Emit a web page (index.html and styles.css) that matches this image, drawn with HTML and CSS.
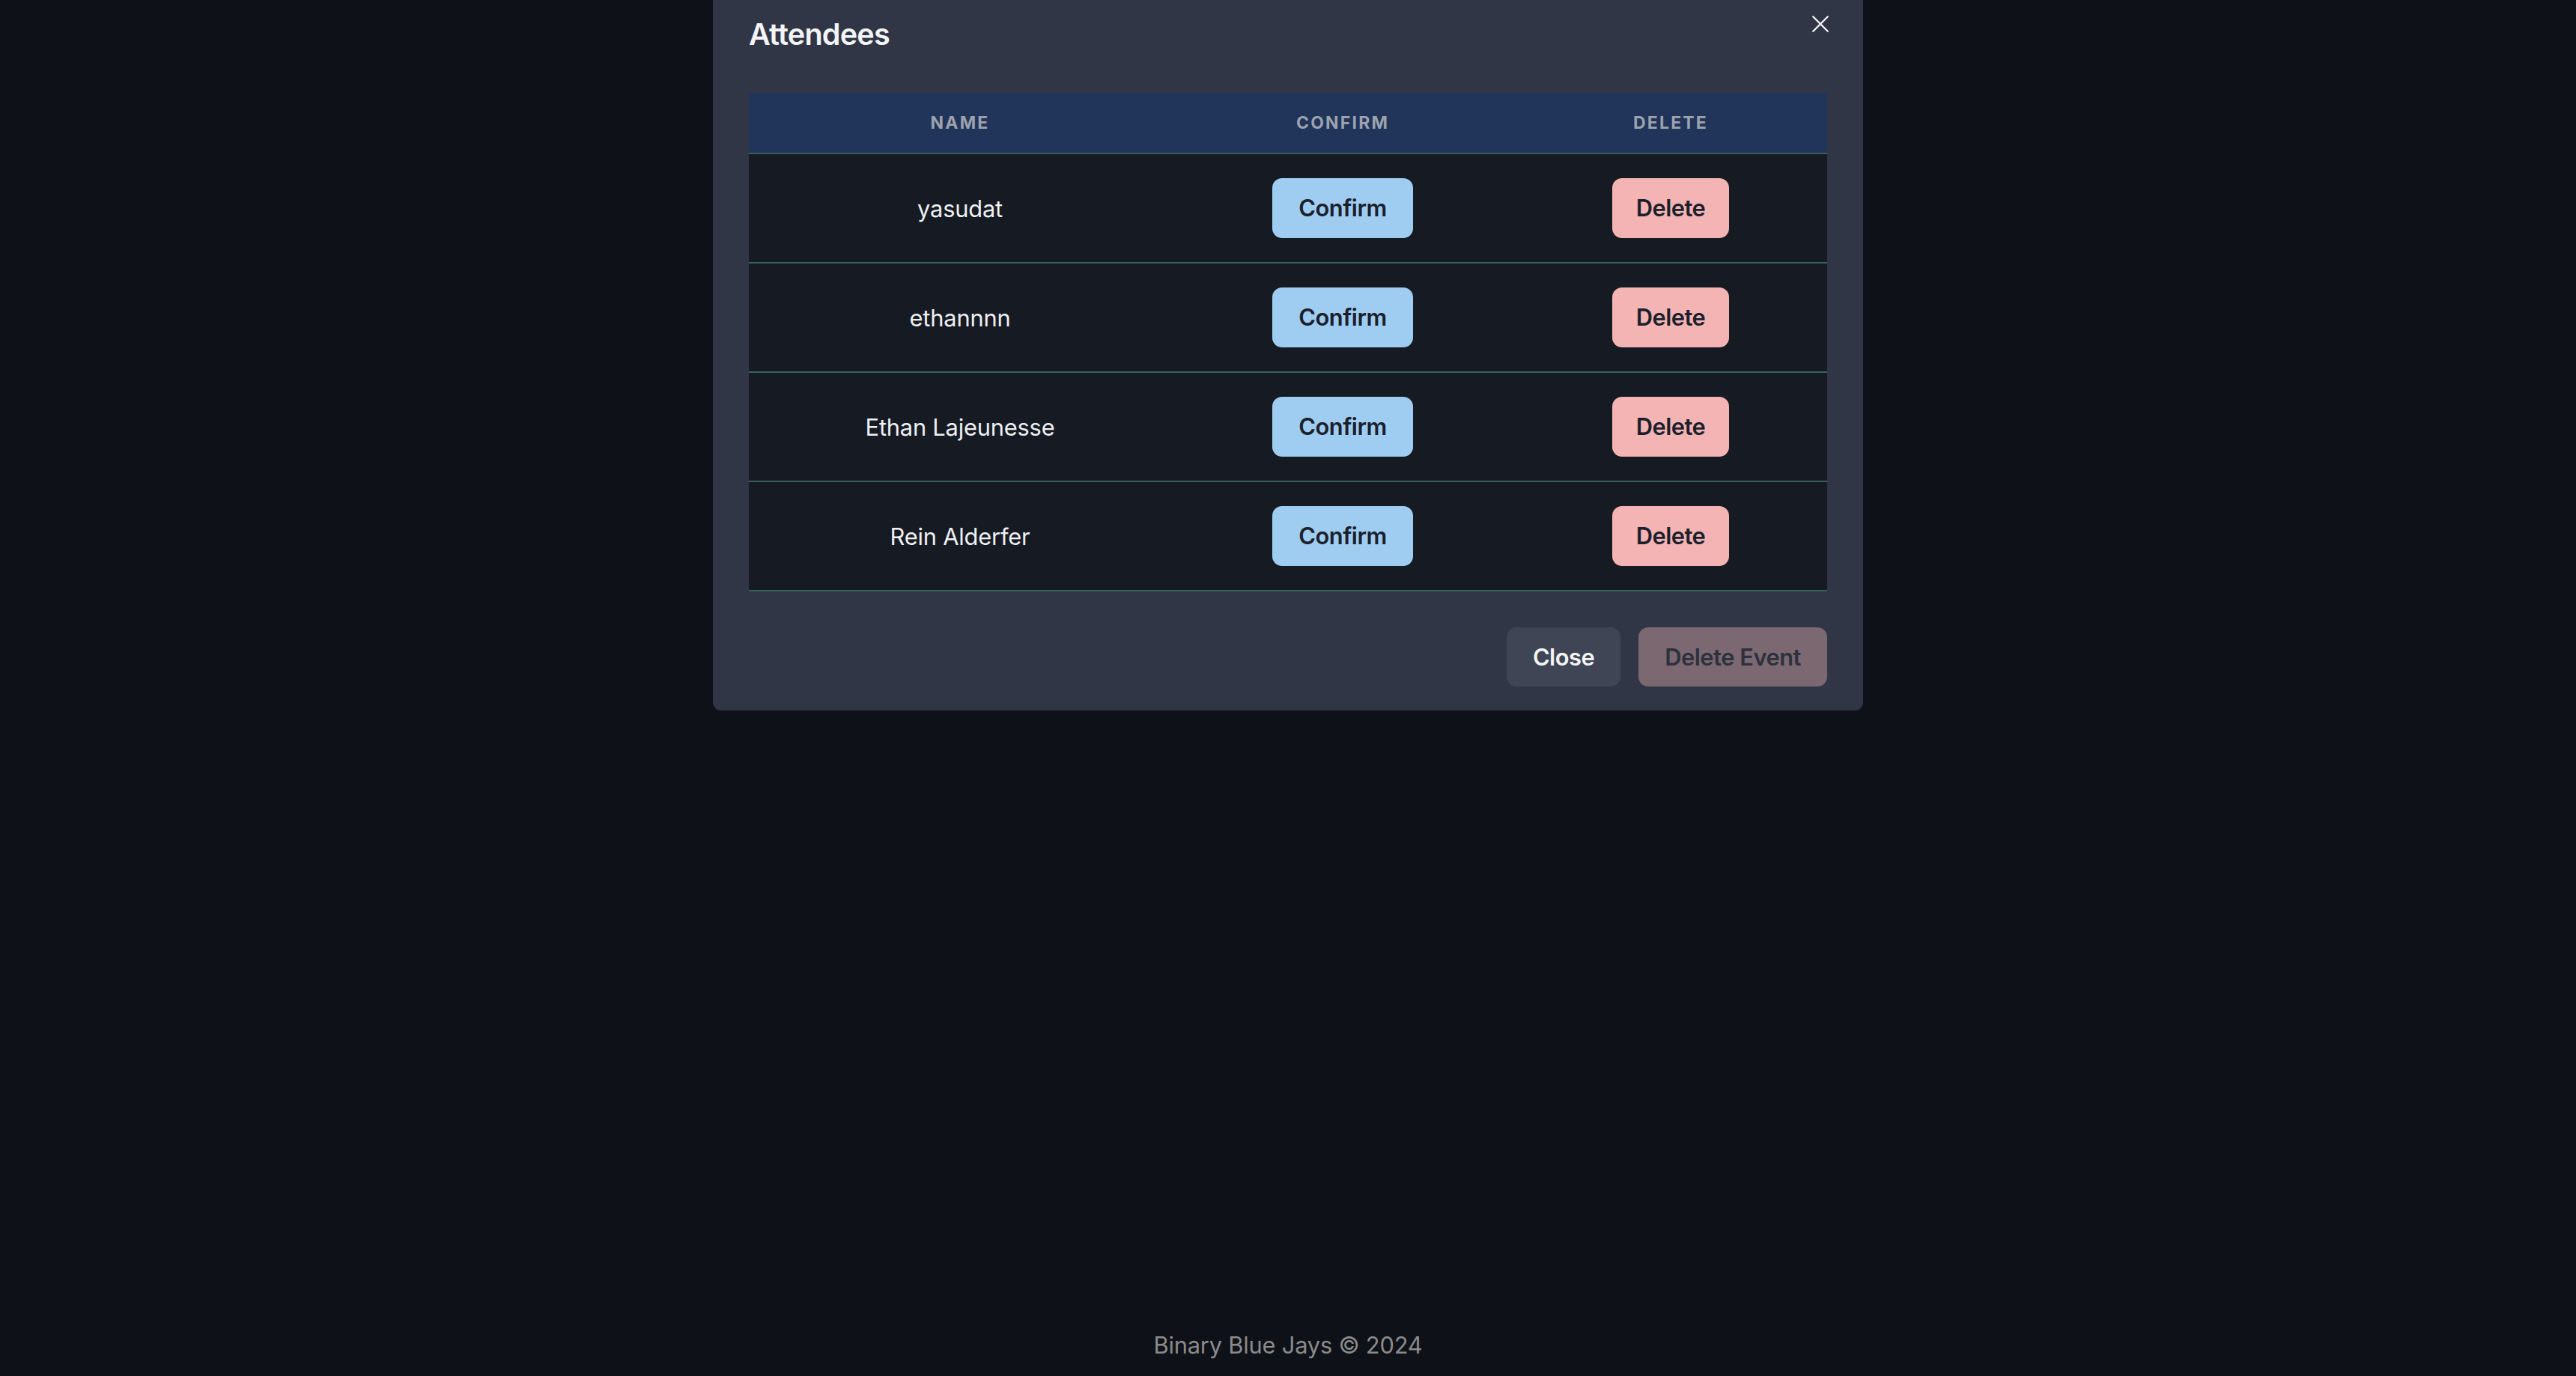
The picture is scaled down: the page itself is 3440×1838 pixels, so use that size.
FILE: index.html
```html
<!DOCTYPE html>
<html lang="en">
<head>
<meta charset="utf-8">
<title>Attendees</title>
<link rel="stylesheet" href="styles.css">
</head>
<body>
<div class="page">
  <div class="modal">
    <div class="modal-head">
      <h2 class="modal-title">Attendees</h2>
      <button class="x-btn" aria-label="Close">
        <svg viewBox="0 0 24 24" width="26" height="26" fill="none" stroke="currentColor" stroke-width="2.2" stroke-linecap="round"><path d="M3 3L21 21M21 3L3 21"/></svg>
      </button>
    </div>
    <table class="att-table">
      <colgroup><col class="c-name"><col class="c-confirm"><col class="c-delete"></colgroup>
      <thead>
        <tr><th>Name</th><th>Confirm</th><th>Delete</th></tr>
      </thead>
      <tbody>
        <tr><td>yasudat</td><td><button class="btn btn-confirm">Confirm</button></td><td><button class="btn btn-delete">Delete</button></td></tr>
        <tr><td>ethannnn</td><td><button class="btn btn-confirm">Confirm</button></td><td><button class="btn btn-delete">Delete</button></td></tr>
        <tr><td>Ethan Lajeunesse</td><td><button class="btn btn-confirm">Confirm</button></td><td><button class="btn btn-delete">Delete</button></td></tr>
        <tr><td>Rein Alderfer</td><td><button class="btn btn-confirm">Confirm</button></td><td><button class="btn btn-delete">Delete</button></td></tr>
      </tbody>
    </table>
    <div class="modal-foot">
      <button class="btn btn-close">Close</button>
      <button class="btn btn-del-event">Delete Event</button>
    </div>
  </div>
  <footer class="site-footer">Binary Blue Jays © 2024</footer>
</div>
</body>
</html>
```

FILE: styles.css
```css
html, body {
  margin: 0;
  padding: 0;
  background: #0e1117;
  font-family: Inter, "Noto Sans", "Liberation Sans", sans-serif;
  letter-spacing: -0.012em;
}

.page {
  min-height: 1838px;
  display: flex;
  flex-direction: column;
  align-items: center;
}

.modal {
  position: relative;
  width: 1536px;
  box-sizing: border-box;
  margin-top: -12px;
  padding: 31px 48px 32px;
  background: #303646;
  border-radius: 11px;
}

.modal-head {
  display: flex;
  align-items: center;
}

.modal-title {
  margin: 0;
  font-size: 39.6px;
  line-height: 55.4px;
  font-weight: 600;
  letter-spacing: -0.02em;
  color: #f3f4f6;
}

.x-btn {
  position: absolute;
  top: 31px;
  right: 44px;
  width: 26px;
  height: 26px;
  padding: 0;
  border: 0;
  background: transparent;
  color: #f3f4f6;
  display: flex;
}

.att-table {
  margin-top: 49.6px;
  width: 1440px;
  border-collapse: collapse;
  table-layout: fixed;
}

.c-name { width: 564px; }
.c-confirm { width: 458px; }
.c-delete { width: 418px; }

.att-table thead tr {
  background: #21345a;
}

.att-table th {
  height: 80px;
  padding: 0;
  font-size: 23px;
  font-weight: 700;
  letter-spacing: 2.2px;
  text-transform: uppercase;
  color: #9ca3af;
  text-align: center;
  border-bottom: 2px solid #37605f;
}

.att-table tbody tr {
  background: #161a22;
}

.att-table td {
  height: 144px;
  padding: 0;
  text-align: center;
  vertical-align: middle;
  font-size: 30.8px;
  color: #eef0f3;
  border-bottom: 2px solid #37605f;
}

.btn {
  font-family: inherit;
  font-size: 30.8px;
  line-height: 44px;
  font-weight: 600;
  letter-spacing: -0.015em;
  height: 80px;
  padding: 0 35px;
  border: 0;
  border-radius: 13px;
  cursor: pointer;
}

.btn-confirm {
  background: #9fcdf1;
  color: #1b202c;
}

.btn-delete {
  background: #f4b4b4;
  color: #1b202c;
  padding: 0 32px;
}

.modal-foot {
  display: flex;
  justify-content: flex-end;
  gap: 24px;
  margin-top: 48px;
}

.btn-close {
  background: #3f4554;
  color: #f3f4f6;
  height: 79px;
}

.btn-del-event {
  background: #7b6871;
  color: #2c313d;
  height: 79px;
}

.site-footer {
  margin-top: auto;
  padding-bottom: 18px;
  font-size: 30.8px;
  line-height: 46.2px;
  color: #8b8b8b;
}
```
